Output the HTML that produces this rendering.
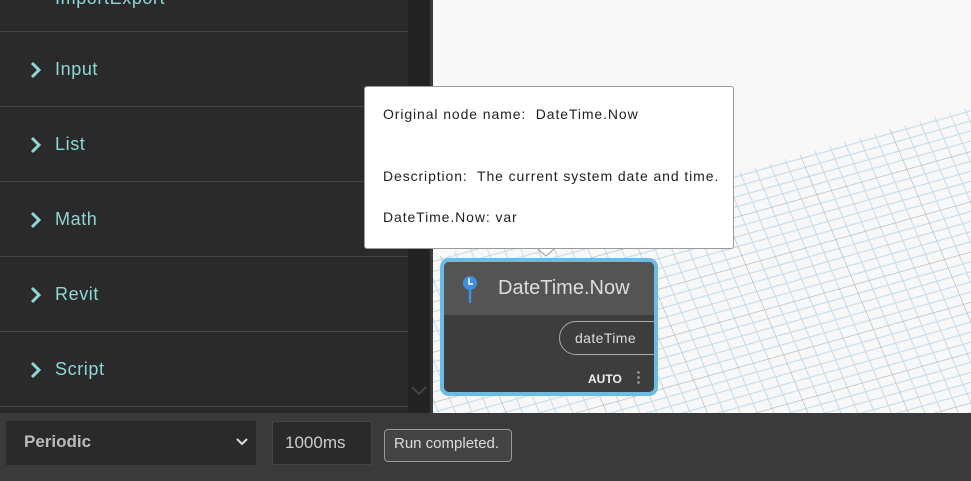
<!DOCTYPE html>
<html><head><style>
*{margin:0;padding:0;box-sizing:border-box}
body{width:971px;height:475px;overflow:hidden;background:#3a3a3a;font-family:"Liberation Sans",sans-serif;position:relative}
.side{position:absolute;left:0;top:0;width:408px;height:413px;background:#2a2a2a}
.row{position:absolute;left:0;width:408px;height:75px;border-top:1px solid #454545}
.row span{position:absolute;left:55px;top:27px;color:#8fd6d6;font-size:18px;letter-spacing:0.6px}
.row svg{position:absolute;left:29px;top:29px}
.scroll{position:absolute;left:408px;top:0;width:22px;height:413px;background:#222}
.canvas{position:absolute;left:433px;top:0;width:538px;height:413px;background:#f8f8f8;overflow:hidden}
.tip{position:absolute;left:364px;top:86px;width:370px;height:163px;background:#fff;border:1px solid #9a9a9a;border-radius:3px;font-size:14px;color:#222;letter-spacing:0.9px}
.tip div{position:absolute;left:18px}
.node{position:absolute;left:440px;top:258px;width:218px;height:138px;border:4px solid #6bbbe3;border-radius:9px;background:#3d3d3d;overflow:hidden}
.hdr{height:53px;background:#545454}
</style></head><body>
<div class="side">
 <div class="row" style="top:-44px;border-top:none"><span style="top:32px">ImportExport</span></div>
 <div class="row" style="top:31px"><svg width="14" height="18"><path d="M3 2l7 7-7 7" stroke="#8fd6d6" stroke-width="3" fill="none"/></svg><span>Input</span></div>
 <div class="row" style="top:106px"><svg width="14" height="18"><path d="M3 2l7 7-7 7" stroke="#8fd6d6" stroke-width="3" fill="none"/></svg><span>List</span></div>
 <div class="row" style="top:181px"><svg width="14" height="18"><path d="M3 2l7 7-7 7" stroke="#8fd6d6" stroke-width="3" fill="none"/></svg><span>Math</span></div>
 <div class="row" style="top:256px"><svg width="14" height="18"><path d="M3 2l7 7-7 7" stroke="#8fd6d6" stroke-width="3" fill="none"/></svg><span>Revit</span></div>
 <div class="row" style="top:331px"><svg width="14" height="18"><path d="M3 2l7 7-7 7" stroke="#8fd6d6" stroke-width="3" fill="none"/></svg><span>Script</span></div>
 <div class="row" style="top:406px"></div>
</div>
<div class="scroll"><svg style="position:absolute;left:3px;top:385px" width="16" height="12"><path d="M1 2l7 7 7-7" stroke="#444" stroke-width="2" fill="none"/></svg></div>
<div class="canvas">
<svg width="538" height="413">
<defs>
<pattern id="g" width="90" height="45" patternUnits="userSpaceOnUse" patternTransform="matrix(1,-0.28,0.42,1,0,0)">
<path d="M0 9H90M0 18H90M0 27H90M0 36H90M15 0V45M30 0V45M45 0V45M60 0V45M75 0V45" stroke="#c4dceb" stroke-width="1" fill="none"/>
<path d="M0 0H90M0 0V45" stroke="#a8b2b9" stroke-width="1.1" fill="none"/>
</pattern>
<clipPath id="c"><polygon points="0,258 538,107 538,413 0,413"/></clipPath>
</defs>
<rect width="538" height="413" fill="url(#g)" clip-path="url(#c)"/>
</svg>
</div>
<div class="tip">
 <div style="top:19px">Original node name:&nbsp; DateTime.Now</div>
 <div style="top:81px">Description:&nbsp; The current system date and time.</div>
 <div style="top:122px">DateTime.Now: var</div>
</div>
<svg style="position:absolute;left:538px;top:248px" width="18" height="10"><path d="M0 1L8 8L16 1" fill="#fff" stroke="#9a9a9a"/></svg>
<div class="node">
 <div class="hdr"></div>
 <svg style="position:absolute;left:18px;top:13px" width="16" height="28"><circle cx="8" cy="8" r="7" fill="#3d8fe0"/><path d="M7 3v6h4" stroke="#fff" stroke-width="1.5" fill="none"/><path d="M8 15v13" stroke="#3d8fe0" stroke-width="2.5"/></svg>
 <div style="position:absolute;left:54px;top:15px;color:#ddd;font-size:20px">DateTime.Now</div>
 <div style="position:absolute;left:115px;top:59px;width:110px;height:34px;border:1px solid #aaa;border-radius:17px;color:#ddd;font-size:14px;padding:8px 0 0 15px;letter-spacing:0.4px">dateTime</div>
 <div style="position:absolute;left:144px;top:110px;color:#eee;font-size:12px;font-weight:bold">AUTO</div>
 <div style="position:absolute;left:193px;top:108px;width:3px;height:15px;background:radial-gradient(circle,#999 1.2px,transparent 1.5px) 0 0/3px 5px"></div>
</div>
<div style="position:absolute;left:6px;top:421px;width:250px;height:44px;background:#2a2a2a"><span style="position:absolute;left:18px;top:11px;color:#bbb;font-weight:bold;font-size:17px">Periodic</span><svg style="position:absolute;left:230px;top:17px" width="12" height="9"><path d="M1 1l5 5 5-5" stroke="#ddd" stroke-width="2" fill="none"/></svg></div>
<div style="position:absolute;left:272px;top:421px;width:100px;height:44px;background:#2a2a2a;border:1px solid #444;color:#ccc;font-size:17px;padding:11px 0 0 12px">1000ms</div>
<div style="position:absolute;left:384px;top:429px;width:128px;height:33px;background:#444;border:1.5px solid #999;border-radius:4px;color:#ddd;font-size:15px;padding:5px 0 0 9px">Run completed.</div>
</body></html>
